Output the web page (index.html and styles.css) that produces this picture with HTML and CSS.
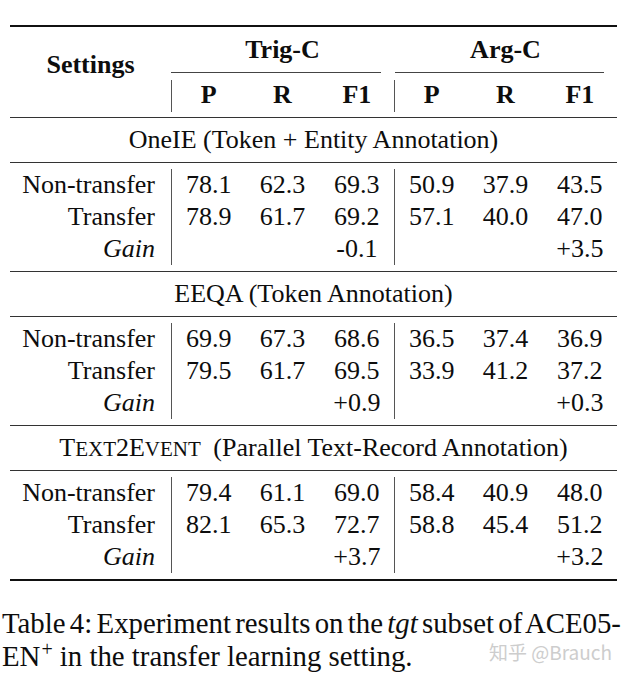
FILE: index.html
```html
<!DOCTYPE html>
<html lang="en">
<head>
<meta charset="utf-8">
<title>Table 4</title>
<link rel="stylesheet" href="styles.css">
</head>
<body>
<div class="page">
  <div class="tbl">
    <div class="head">
      <div class="settings">Settings</div>
      <div class="group g1"><div class="gtitle">Trig-C</div><div class="cmid"></div></div>
      <div class="group g2"><div class="gtitle">Arg-C</div><div class="cmid"></div></div>
      <div class="hc vl">P</div><div class="hc">R</div><div class="hc">F1</div>
      <div class="hc vl">P</div><div class="hc">R</div><div class="hc">F1</div>
    </div>

    <div class="sec">OneIE (Token + Entity Annotation)</div>
    <div class="data">
      <div class="lab">Non-transfer</div><div class="num vl">78.1</div><div class="num">62.3</div><div class="num">69.3</div><div class="num vl">50.9</div><div class="num">37.9</div><div class="num">43.5</div>
      <div class="lab">Transfer</div><div class="num vl">78.9</div><div class="num">61.7</div><div class="num">69.2</div><div class="num vl">57.1</div><div class="num">40.0</div><div class="num">47.0</div>
      <div class="lab it">Gain</div><div class="num vl"></div><div class="num"></div><div class="num">-0.1</div><div class="num vl"></div><div class="num"></div><div class="num">+3.5</div>
    </div>

    <div class="sec">EEQA (Token Annotation)</div>
    <div class="data">
      <div class="lab">Non-transfer</div><div class="num vl">69.9</div><div class="num">67.3</div><div class="num">68.6</div><div class="num vl">36.5</div><div class="num">37.4</div><div class="num">36.9</div>
      <div class="lab">Transfer</div><div class="num vl">79.5</div><div class="num">61.7</div><div class="num">69.5</div><div class="num vl">33.9</div><div class="num">41.2</div><div class="num">37.2</div>
      <div class="lab it">Gain</div><div class="num vl"></div><div class="num"></div><div class="num">+0.9</div><div class="num vl"></div><div class="num"></div><div class="num">+0.3</div>
    </div>

    <div class="sec"><span class="sc">T<span class="sm">EXT</span>2E<span class="sm">VENT</span></span> (Parallel Text-Record Annotation)</div>
    <div class="data last">
      <div class="lab">Non-transfer</div><div class="num vl">79.4</div><div class="num">61.1</div><div class="num">69.0</div><div class="num vl">58.4</div><div class="num">40.9</div><div class="num">48.0</div>
      <div class="lab">Transfer</div><div class="num vl">82.1</div><div class="num">65.3</div><div class="num">72.7</div><div class="num vl">58.8</div><div class="num">45.4</div><div class="num">51.2</div>
      <div class="lab it">Gain</div><div class="num vl"></div><div class="num"></div><div class="num">+3.7</div><div class="num vl"></div><div class="num"></div><div class="num">+3.2</div>
    </div>
  </div>

  <div class="caption">
    <div class="line1">Table 4: Experiment results on the <i class="math">tgt</i> subset of ACE05-</div>
    <div class="line2">EN<span class="plus">+</span> in the transfer learning setting.</div>
    <div class="wm">知乎 @Brauch</div>
  </div>
</div>
</body>
</html>
```

FILE: styles.css
```css
html, body {
  margin: 0;
  padding: 0;
  background: #ffffff;
}

.page {
  width: 628px;
  height: 677px;
  overflow: hidden;
  font-family: "Liberation Serif", "Times New Roman", serif;
  color: #0d0d0d;
  padding-top: 25px;
  box-sizing: border-box;
}

.tbl {
  margin-left: 10px;
  width: 607px;
  border-top: 2px solid #111111;
  border-bottom: 2px solid #111111;
  font-size: 26px;
}

.head,
.data {
  display: grid;
  grid-template-columns: 161px repeat(6, 1fr);
}

.head {
  grid-template-rows: 46px 44px;
  border-bottom: 1px solid #333333;
}

.settings {
  grid-row: 1 / 3;
  grid-column: 1;
  font-weight: bold;
  text-align: center;
  line-height: 32px;
  padding-top: 22px;
}

.group {
  grid-row: 1;
  display: flex;
  flex-direction: column;
}

.g1 { grid-column: 2 / 5; }
.g2 { grid-column: 5 / 8; }

.gtitle {
  height: 45px;
  line-height: 45px;
  text-align: center;
  font-weight: bold;
}

.cmid {
  border-top: 1px solid #444444;
  margin-right: 13px;
}

.g2 .cmid {
  margin-left: 1px;
}

.hc {
  grid-row: 2;
  margin: 7px 0 5px;
  line-height: 30px;
  text-align: center;
  font-weight: bold;
}

.vl {
  border-left: 1px solid #555555;
}

.sec {
  height: 44px;
  line-height: 44px;
  text-align: center;
  border-bottom: 1px solid #333333;
}

.sc {
  margin-right: 6px;
}

.sm {
  font-size: 21px;
}

.data {
  padding: 6px 0;
  grid-auto-rows: 32px;
  border-bottom: 1px solid #333333;
}

.data.last {
  border-bottom: none;
}

.lab {
  line-height: 32px;
  text-align: right;
  padding-right: 16px;
}

.it {
  font-style: italic;
}

.num {
  line-height: 32px;
  text-align: center;
}

.caption {
  position: relative;
  margin-top: 26px;
  margin-left: 2px;
  width: 620px;
  font-size: 28.8px;
  line-height: 33px;
}

.line1 {
  white-space: nowrap;
  word-spacing: -2.9px;
}

.line2 {
  white-space: nowrap;
}

.math {
  font-style: italic;
}

.plus {
  display: inline-block;
  font-size: 20px;
  line-height: 14px;
  vertical-align: 10px;
  margin-left: 1px;
}

.wm {
  position: absolute;
  left: 487px;
  top: 33px;
  font-family: "Noto Sans CJK SC", "Noto Sans", sans-serif;
  font-size: 19px;
  line-height: 24px;
  color: #cdcdcd;
  white-space: nowrap;
}
```
